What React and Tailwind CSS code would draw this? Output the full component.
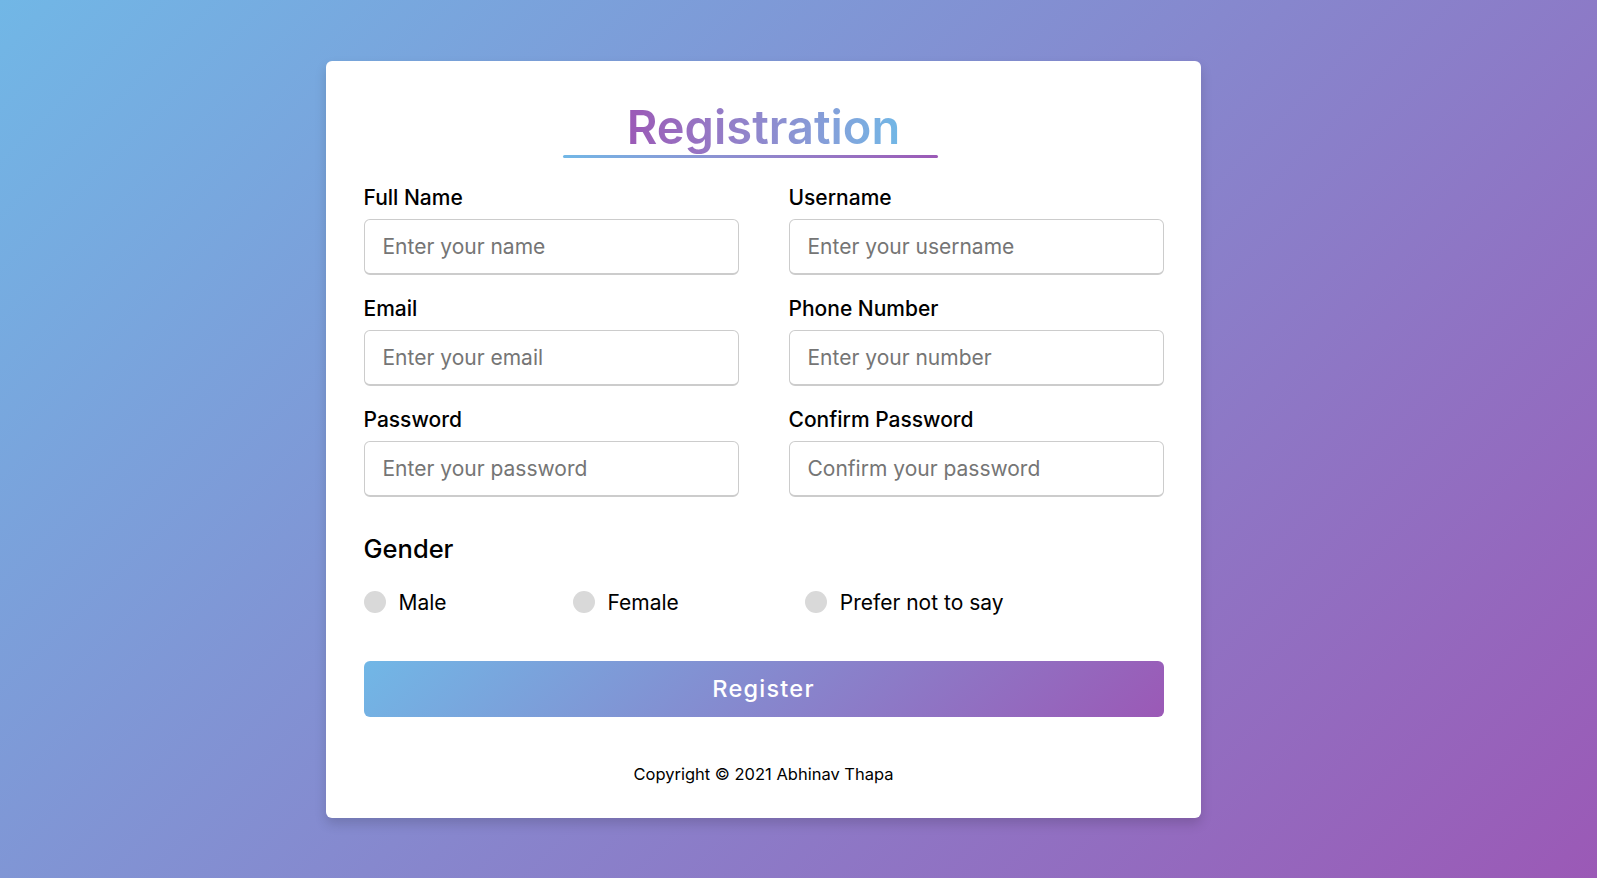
import { useState } from 'react'

const FIELDS = [
  { label: 'Full Name', placeholder: 'Enter your name' },
  { label: 'Username', placeholder: 'Enter your username' },
  { label: 'Email', placeholder: 'Enter your email' },
  { label: 'Phone Number', placeholder: 'Enter your number' },
  { label: 'Password', placeholder: 'Enter your password', type: 'password' },
  { label: 'Confirm Password', placeholder: 'Confirm your password', type: 'password' },
]

const GENDERS = ['Male', 'Female', 'Prefer not to say']

const App = () => {
  const [gender, setGender] = useState('')

  return (
    <div className="min-h-screen flex items-center pl-[326px] bg-[linear-gradient(135deg,#71b7e6,#9b59b6)] font-['Inter','Noto_Sans',sans-serif]">
      <div className="w-[875px] bg-white rounded-[6px] px-[37.5px] pt-[31px] pb-[34px] shadow-[0_6px_12px_rgba(0,0,0,0.15)]">
        {/* Title */}
        <div className="flex flex-col items-center pt-[7px]">
          <h1 className="text-[47px] leading-[56px] font-semibold bg-linear-to-r from-[#9b59b6] to-[#71b7e6] bg-clip-text text-transparent">
            Registration
          </h1>
          <div className="h-[3px] w-[375px] mr-[26px] rounded-full bg-linear-to-r from-[#71b7e6] to-[#9b59b6]" />
        </div>

        <form onSubmit={(e) => e.preventDefault()}>
          <div className="grid grid-cols-2 gap-x-[50px] gap-y-[21px] mt-[27px]">
            {FIELDS.map((f) => (
              <div key={f.label}>
                <span className="block text-[21px] leading-[25px] font-medium text-black mb-[9px]">{f.label}</span>
                <input
                  type={f.type || 'text'}
                  placeholder={f.placeholder}
                  className="w-full h-[56px] rounded-[6px] border border-[#ccc] border-b-[2.5px] pl-[18px] text-[21px] text-black placeholder:text-[#757575] outline-none"
                />
              </div>
            ))}
          </div>

          {/* Gender */}
          <div className="mt-[36px]">
            <span className="block text-[25.5px] leading-[31px] font-medium text-black">Gender</span>
            <div className="flex justify-between w-[80%] mt-[26px]">
              {GENDERS.map((g) => (
                <label key={g} className="flex items-center cursor-pointer" onClick={() => setGender(g)}>
                  <span className={`w-[22.5px] h-[22.5px] rounded-full mr-[12.5px] ${gender === g ? 'bg-[#9b59b6]' : 'bg-[#d9d9d9]'}`} />
                  <span className="text-[21px] leading-[25px] text-black">{g}</span>
                </label>
              ))}
            </div>
          </div>

          <button
            type="submit"
            className="mt-[46px] w-full h-[56px] rounded-[6px] text-white text-[23.5px] font-medium tracking-[1.25px] bg-[linear-gradient(135deg,#71b7e6,#9b59b6)]"
          >
            Register
          </button>
        </form>

        <p className="mt-[47px] text-center text-[16.5px] leading-[20px] text-black">Copyright © 2021 Abhinav Thapa</p>
      </div>
    </div>
  )
}

export default App
